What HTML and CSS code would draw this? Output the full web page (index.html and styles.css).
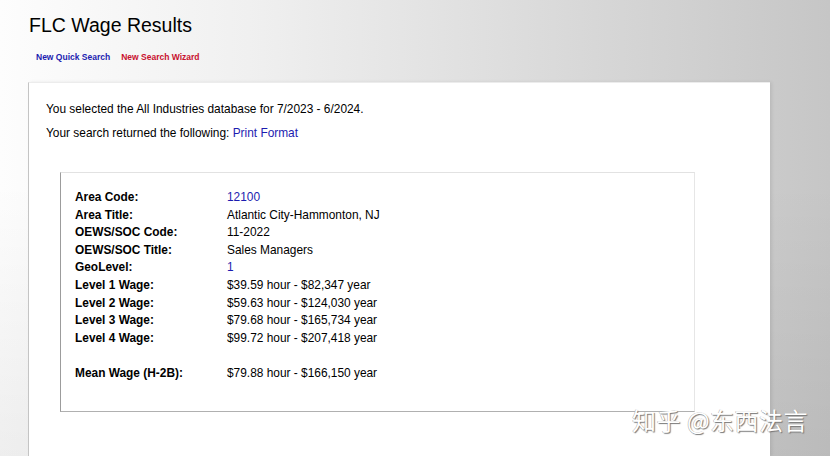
FILE: index.html
```html
<!DOCTYPE html>
<html>
<head>
<meta charset="utf-8">
<link rel="stylesheet" href="styles.css">
</head>
<body>
<div class="page">
  <h1 class="title">FLC Wage Results</h1>
  <nav class="nav">
    <a class="nav-link blue" href="#">New Quick Search</a>
    <a class="nav-link red" href="#">New Search Wizard</a>
  </nav>
  <main class="panel">
    <p class="intro">You selected the All Industries database for 7/2023 - 6/2024.</p>
    <p class="intro">Your search returned the following: <a class="link" href="#">Print Format</a></p>
    <section class="results">
      <div class="grid">
        <span class="label">Area Code:</span><a class="link value" href="#">12100</a>
        <span class="label">Area Title:</span><span class="value">Atlantic City-Hammonton, NJ</span>
        <span class="label">OEWS/SOC Code:</span><span class="value">11-2022</span>
        <span class="label">OEWS/SOC Title:</span><span class="value">Sales Managers</span>
        <span class="label">GeoLevel:</span><a class="link value" href="#">1</a>
        <span class="label">Level 1 Wage:</span><span class="value">$39.59 hour - $82,347 year</span>
        <span class="label">Level 2 Wage:</span><span class="value">$59.63 hour - $124,030 year</span>
        <span class="label">Level 3 Wage:</span><span class="value">$79.68 hour - $165,734 year</span>
        <span class="label">Level 4 Wage:</span><span class="value">$99.72 hour - $207,418 year</span>
        <span class="spacer"></span><span class="spacer"></span>
        <span class="label">Mean Wage (H-2B):</span><span class="value">$79.88 hour - $166,150 year</span>
      </div>
    </section>
  </main>
</div>
<div class="watermark">知乎 @东西法言</div>
</body>
</html>
```

FILE: styles.css
```css
html, body {
  margin: 0;
  height: 456px;
  overflow: hidden;
}
body {
  font-family: "Liberation Sans", Arial, sans-serif;
  color: #000;
  background:
    linear-gradient(to bottom, rgba(0,0,0,0) 40%, rgba(0,0,0,0.06) 100%),
    linear-gradient(to right, #fdfdfd 0%, #f0f0f0 30%, #dedede 60%, #cfcfcf 85%, #c6c6c6 100%);
  position: relative;
}
.page {
  display: flex;
  flex-direction: column;
  padding-left: 28px;
  height: 456px;
  box-sizing: border-box;
}
.title {
  margin: 0;
  padding: 13px 0 0 1px;
  font-size: 19.5px;
  font-weight: normal;
  line-height: 24px;
}
.nav {
  display: flex;
  gap: 11px;
  margin-top: 14px;
  padding-left: 8px;
  line-height: 12px;
}
.nav-link {
  font-size: 8.5px;
  font-weight: bold;
  text-decoration: none;
}
.blue { color: #1c1cb0; }
.red { color: #c8102e; }
.panel {
  margin-top: 19px;
  width: 742px;
  flex: 1;
  box-sizing: border-box;
  background: #fff;
  border-left: 1px solid #c4c4c4;
  border-top: 1px solid #ececec;
  box-shadow: 2px 0 3px rgba(0,0,0,0.08);
  padding: 18px 0 0 17px;
}
.intro {
  margin: 0 0 8px 0;
  font-size: 11.9px;
  line-height: 16px;
}
.link {
  color: #1c1cb0;
  text-decoration: none;
}
.results {
  margin: 31px 0 0 14px;
  width: 635px;
  height: 240px;
  box-sizing: border-box;
  border-left: 1px solid #9c9c9c;
  border-bottom: 1px solid #b0b0b0;
  border-top: 1px solid #e2e2e2;
  border-right: 1px solid #e6e6e6;
  padding: 16px 0 0 14px;
}
.grid {
  display: grid;
  grid-template-columns: 152px auto;
  font-size: 11.9px;
  line-height: 17.6px;
}
.label { font-weight: bold; }
.spacer { height: 17.6px; }
.watermark {
  position: absolute;
  left: 632px;
  top: 404px;
  font-family: "Noto Sans CJK SC", sans-serif;
  font-size: 24px;
  line-height: 32px;
  color: #fff;
  letter-spacing: 0.5px;
  text-shadow: 1px 1px 1px #777, -0.5px -0.5px 0.5px #aaa;
}
```
